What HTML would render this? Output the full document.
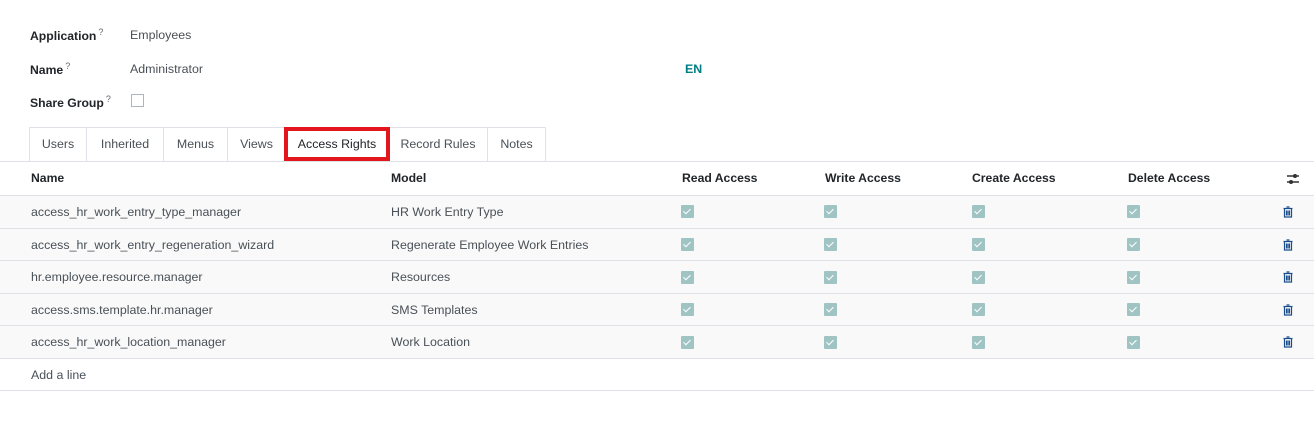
<!DOCTYPE html>
<html><head><meta charset="utf-8"><style>
*{box-sizing:border-box;margin:0;padding:0}
body{width:1314px;height:445px;background:#fff;font-family:"Liberation Sans",sans-serif;font-size:12.4px;color:#495057;position:relative;overflow:hidden}
.a{position:absolute;white-space:nowrap}
.lbl{font-weight:bold;color:#212529;font-size:12.2px}
sup{font-size:9px;color:#666;font-weight:normal;margin-left:2px}
.tab{position:absolute;top:127px;height:34px;border:1px solid #dee2e6;border-bottom:none;line-height:33px;text-align:center;color:#495057;background:#fff}
.hl{position:absolute;left:0;width:1314px;height:1px;background:#dee2e6}
.row{position:absolute;left:0;width:1314px;background:#f9f9f9}
.cb{position:absolute;width:13px;height:13px;background:#a0c4c4;border-radius:1px}
.cb:after{content:"";position:absolute;left:4px;top:2px;width:3px;height:6px;border:solid #fff;border-width:0 1.5px 1.5px 0;transform:rotate(45deg)}
.th{font-weight:bold;color:#212529;font-size:12.2px}
</style></head><body>
<div class="a lbl" style="left:30px;top:27px">Application<sup>?</sup></div>
<div class="a" style="left:130px;top:28px">Employees</div>
<div class="a lbl" style="left:30px;top:61px">Name<sup>?</sup></div>
<div class="a" style="left:130px;top:62px">Administrator</div>
<div class="a" style="left:685px;top:62px;color:#017e84;font-weight:bold">EN</div>
<div class="a lbl" style="left:30px;top:94px">Share Group<sup>?</sup></div>
<div class="a" style="left:131px;top:94px;width:13px;height:13px;border:1px solid #adb5bd"></div>

<div class="tab" style="left:29px;width:58px">Users</div>
<div class="tab" style="left:86px;width:78px">Inherited</div>
<div class="tab" style="left:163px;width:65px">Menus</div>
<div class="tab" style="left:227px;width:59px">Views</div>
<div class="tab" style="left:388px;width:100px">Record Rules</div>
<div class="tab" style="left:487px;width:59px">Notes</div>
<div class="hl" style="top:161px"></div>
<div class="tab" style="left:284px;width:106px;border:4px solid #e3151d;line-height:26px;color:#212529;height:34px;top:127px">Access Rights</div>

<div class="a th" style="left:31px;top:171px">Name</div>
<div class="a th" style="left:391px;top:171px">Model</div>
<div class="a th" style="left:682px;top:171px">Read Access</div>
<div class="a th" style="left:825px;top:171px">Write Access</div>
<div class="a th" style="left:972px;top:171px">Create Access</div>
<div class="a th" style="left:1128px;top:171px">Delete Access</div>
<svg class="a" style="left:1286px;top:172px" width="14" height="14" viewBox="0 0 14 14"><path d="M1 4h12M1 10h12" stroke="#333" stroke-width="1.5"/><circle cx="9" cy="4" r="2" fill="#333"/><circle cx="5" cy="10" r="2" fill="#333"/></svg>

<div class="hl" style="top:195px"></div>
<div class="row" style="top:196px;height:32px"></div>
<div class="row" style="top:229px;height:31px"></div>
<div class="row" style="top:261px;height:32px"></div>
<div class="row" style="top:294px;height:31px"></div>
<div class="row" style="top:326px;height:32px"></div>
<div class="hl" style="top:228px"></div>
<div class="hl" style="top:260px"></div>
<div class="hl" style="top:293px"></div>
<div class="hl" style="top:325px"></div>
<div class="hl" style="top:358px"></div>
<div class="hl" style="top:390px"></div>

<div class="a" style="left:31px;top:205px">access_hr_work_entry_type_manager</div>
<div class="a" style="left:391px;top:205px">HR Work Entry Type</div>
<div class="a" style="left:31px;top:238px">access_hr_work_entry_regeneration_wizard</div>
<div class="a" style="left:391px;top:238px">Regenerate Employee Work Entries</div>
<div class="a" style="left:31px;top:270px">hr.employee.resource.manager</div>
<div class="a" style="left:391px;top:270px">Resources</div>
<div class="a" style="left:31px;top:303px">access.sms.template.hr.manager</div>
<div class="a" style="left:391px;top:303px">SMS Templates</div>
<div class="a" style="left:31px;top:335px">access_hr_work_location_manager</div>
<div class="a" style="left:391px;top:335px">Work Location</div>
<div class="a" style="left:31px;top:368px">Add a line</div>

<div class="cb" style="left:681px;top:205px"></div><div class="cb" style="left:824px;top:205px"></div><div class="cb" style="left:972px;top:205px"></div><div class="cb" style="left:1127px;top:205px"></div>
<div class="cb" style="left:681px;top:238px"></div><div class="cb" style="left:824px;top:238px"></div><div class="cb" style="left:972px;top:238px"></div><div class="cb" style="left:1127px;top:238px"></div>
<div class="cb" style="left:681px;top:271px"></div><div class="cb" style="left:824px;top:271px"></div><div class="cb" style="left:972px;top:271px"></div><div class="cb" style="left:1127px;top:271px"></div>
<div class="cb" style="left:681px;top:303px"></div><div class="cb" style="left:824px;top:303px"></div><div class="cb" style="left:972px;top:303px"></div><div class="cb" style="left:1127px;top:303px"></div>
<div class="cb" style="left:681px;top:336px"></div><div class="cb" style="left:824px;top:336px"></div><div class="cb" style="left:972px;top:336px"></div><div class="cb" style="left:1127px;top:336px"></div>

<svg class="a" style="left:1283px;top:206px" width="10" height="12" viewBox="0 0 10 12"><path d="M3.5 1h3M0.5 2.5h9M1.5 3v8h7V3M3.5 4.5v5M5 4.5v5M6.5 4.5v5" stroke="#1a4e8a" stroke-width="1.2" fill="none"/></svg>
<svg class="a" style="left:1283px;top:239px" width="10" height="12" viewBox="0 0 10 12"><path d="M3.5 1h3M0.5 2.5h9M1.5 3v8h7V3M3.5 4.5v5M5 4.5v5M6.5 4.5v5" stroke="#1a4e8a" stroke-width="1.2" fill="none"/></svg>
<svg class="a" style="left:1283px;top:271px" width="10" height="12" viewBox="0 0 10 12"><path d="M3.5 1h3M0.5 2.5h9M1.5 3v8h7V3M3.5 4.5v5M5 4.5v5M6.5 4.5v5" stroke="#1a4e8a" stroke-width="1.2" fill="none"/></svg>
<svg class="a" style="left:1283px;top:304px" width="10" height="12" viewBox="0 0 10 12"><path d="M3.5 1h3M0.5 2.5h9M1.5 3v8h7V3M3.5 4.5v5M5 4.5v5M6.5 4.5v5" stroke="#1a4e8a" stroke-width="1.2" fill="none"/></svg>
<svg class="a" style="left:1283px;top:336px" width="10" height="12" viewBox="0 0 10 12"><path d="M3.5 1h3M0.5 2.5h9M1.5 3v8h7V3M3.5 4.5v5M5 4.5v5M6.5 4.5v5" stroke="#1a4e8a" stroke-width="1.2" fill="none"/></svg>
</body></html>
